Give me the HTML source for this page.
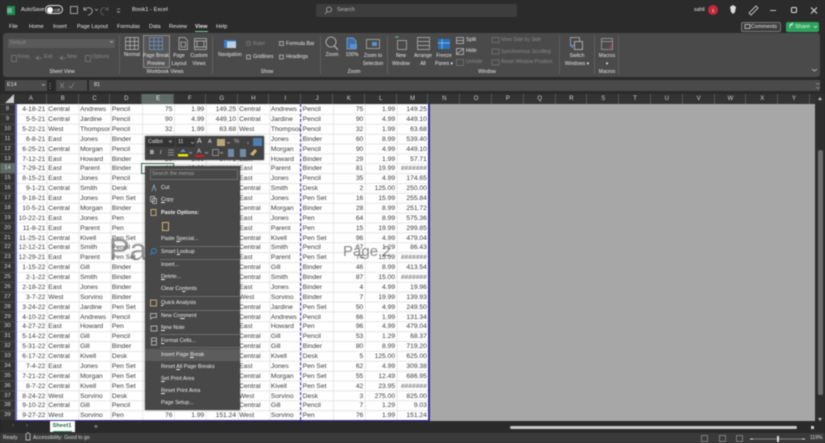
<!DOCTYPE html>
<html><head><meta charset="utf-8">
<style>
html,body{margin:0;padding:0;width:825px;height:443px;overflow:hidden;background:#262626}
#w{position:absolute;left:0;top:0;width:825px;height:443px;overflow:hidden;background:#2a2a2a;font-family:"Liberation Sans",sans-serif;filter:blur(.5px)}
.b{position:absolute}
.t{position:absolute;white-space:nowrap;color:#e6e6e6;font-size:5.4px;line-height:7px}
.c{transform:translateX(-50%);text-align:center}
.d{color:#8a8a8a}
.tab{font-size:5.5px;color:#e8e8e8;top:24px}
#gb{position:absolute;left:15px;top:104px;width:413.4px;height:316px;background-color:#fff;background-image:linear-gradient(to right,#e6e6e6 1px,transparent 1px),linear-gradient(to bottom,#e6e6e6 1px,transparent 1px);background-size:31.8px 9.88px}
#g{position:absolute;left:15px;top:105.2px;display:grid;grid-template-columns:repeat(13,31.8px);grid-auto-rows:9.88px;width:413.4px;color:#3c3c3c;font-size:6.7px;line-height:9.88px}
#g span{white-space:nowrap;overflow:hidden;padding:0 1.5px}
#g span:nth-child(13n+1),#g span:nth-child(13n+5),#g span:nth-child(13n+6),#g span:nth-child(13n+7),#g span:nth-child(13n+11),#g span:nth-child(13n+12),#g span:nth-child(13n){text-align:right}
#rb{position:absolute;left:0;top:104px;width:15px;height:316px;background:#333;background-image:linear-gradient(to bottom,#4a4a4a 1px,transparent 1px);background-size:15px 9.88px}
#r{position:absolute;left:0;top:105.2px;width:15px;display:grid;grid-auto-rows:9.88px;color:#d8d8d8;font-size:5.8px;line-height:9.88px;text-align:center}
#ch{position:absolute;left:15px;top:94px;height:10px;width:800px;display:grid;grid-template-columns:repeat(25,31.8px);background:#333;color:#d0d0d0;font-size:6px;line-height:10px;text-align:center}
#ch span{box-shadow:inset -1px 0 #555}
.m{position:absolute;left:161px;font-size:5.4px;line-height:7px;color:#ececec;white-space:nowrap}
.s{position:absolute;left:160px;width:80px;height:1px;background:#6a6a6a}
u{text-decoration:underline}
</style></head><body><div id="w">

<div class="b" style="left:0;top:0;width:825px;height:33px;background:#2b2b2b"></div>
<div class="b" style="left:316px;top:4px;width:201px;height:13px;background:#3d3d3d;border-radius:2px"></div>
<div class="t" style="left:337px;top:7px;color:#bbb;font-size:5.6px">Search</div>
<div class="t" style="left:21px;top:7px;font-size:5.4px">AutoSave</div>
<div class="b" style="left:45px;top:5px;width:18px;height:9px;border:1px solid #ddd;border-radius:6px;box-sizing:border-box"></div>
<div class="b" style="left:46.5px;top:6.5px;width:6px;height:6px;background:#fff;border-radius:50%"></div>
<div class="t" style="left:54px;top:6.5px;font-size:4.6px">Off</div>
<div class="t" style="left:132px;top:7px;font-size:5.8px">Book1 - Excel</div>
<div class="t" style="left:694px;top:7px;font-size:5.2px">sahil</div>
<div class="b" style="left:708px;top:5px;width:10px;height:10px;border-radius:50%;background:#c4283c"></div>
<div class="t c" style="left:713px;top:6.5px;font-size:4.6px;color:#fff">1</div>

<div class="t tab" style="left:9px">File</div>
<div class="t tab" style="left:29px">Home</div>
<div class="t tab" style="left:53px">Insert</div>
<div class="t tab" style="left:77px">Page Layout</div>
<div class="t tab" style="left:117px">Formulas</div>
<div class="t tab" style="left:149px">Data</div>
<div class="t tab" style="left:169px">Review</div>
<div class="t tab" style="left:195px;font-weight:bold">View</div>
<div class="b" style="left:195px;top:31px;width:13px;height:1px;background:#7fc9a0"></div>
<div class="t tab" style="left:216px">Help</div>

<div class="b" style="left:741px;top:22px;width:40px;height:10px;background:#3c3c3c;border:1px solid #777;border-radius:2px;box-sizing:border-box"></div>
<div class="t" style="left:751px;top:23.5px;font-size:5.4px">Comments</div>
<div class="b" style="left:786px;top:22px;width:33px;height:10px;background:#2ea25d;border-radius:2px"></div>
<div class="t" style="left:795px;top:23.5px;font-size:5.6px;color:#dfffe8">Share</div>

<div class="b" style="left:3px;top:33px;width:817px;height:44px;background:#4a4a4a;border-radius:3px"></div>
<div class="b" style="left:8px;top:39px;width:107px;height:9px;background:#5a5a5a"></div>
<div class="t d" style="left:10px;top:40px;font-size:5px">Default</div>
<div class="t d" style="left:18px;top:54px;font-size:5px">Keep</div>
<div class="t d" style="left:44px;top:54px;font-size:5px">Exit</div>
<div class="t d" style="left:67px;top:54px;font-size:5px">New</div>
<div class="t d" style="left:92px;top:54px;font-size:5px">Options</div>
<div class="t c" style="left:62px;top:68.5px;font-size:5px">Sheet View</div>

<div class="b" style="left:143px;top:35px;width:27px;height:33px;border:1px solid #8a8a8a;background:#565656;box-sizing:border-box"></div>
<div class="t c" style="left:132px;top:51.5px;font-size:5px">Normal</div>
<div class="t c" style="left:156px;top:51.5px;font-size:5px;line-height:8px">Page Break<br>Preview</div>
<div class="t c" style="left:179px;top:51.5px;font-size:5px;line-height:8px">Page<br>Layout</div>
<div class="t c" style="left:199px;top:51.5px;font-size:5px;line-height:8px">Custom<br>Views</div>
<div class="t c" style="left:165px;top:68.5px;font-size:5px">Workbook Views</div>

<div class="t c" style="left:230px;top:51.5px;font-size:5px">Navigation</div>
<div class="t d" style="left:253px;top:40.5px;font-size:5px">Ruler</div>
<div class="t" style="left:253px;top:54px;font-size:5.2px">Gridlines</div>
<div class="t" style="left:286px;top:40.5px;font-size:5.2px">Formula Bar</div>
<div class="t" style="left:286px;top:54px;font-size:5.2px">Headings</div>
<div class="t c" style="left:267px;top:68.5px;font-size:5px">Show</div>

<div class="t c" style="left:332px;top:51.5px;font-size:5px">Zoom</div>
<div class="t c" style="left:352px;top:51.5px;font-size:5px">100%</div>
<div class="t c" style="left:373px;top:51.5px;font-size:5px;line-height:8px">Zoom to<br>Selection</div>
<div class="t c" style="left:354px;top:68.5px;font-size:5px">Zoom</div>

<div class="t c" style="left:401px;top:51.5px;font-size:5px;line-height:8px">New<br>Window</div>
<div class="t c" style="left:423px;top:51.5px;font-size:5px;line-height:8px">Arrange<br>All</div>
<div class="t c" style="left:444px;top:51.5px;font-size:5px;line-height:8px">Freeze<br>Panes ▾</div>
<div class="t" style="left:466px;top:37px;font-size:5.2px">Split</div>
<div class="t" style="left:466px;top:48px;font-size:5.2px">Hide</div>
<div class="t d" style="left:466px;top:59px;font-size:5.2px">Unhide</div>
<div class="t d" style="left:501px;top:37px;font-size:5px">View Side by Side</div>
<div class="t d" style="left:501px;top:48.5px;font-size:5px">Synchronous Scrolling</div>
<div class="t d" style="left:501px;top:59px;font-size:5px">Reset Window Position</div>
<div class="t c" style="left:487px;top:68.5px;font-size:5px">Window</div>
<div class="t c" style="left:577px;top:51.5px;font-size:5px;line-height:8px">Switch<br>Windows ▾</div>
<div class="t c" style="left:607px;top:51.5px;font-size:5px;line-height:8px">Macros<br>▾</div>
<div class="t c" style="left:607px;top:68.5px;font-size:5px">Macros</div>

<div class="b" style="left:5px;top:80px;width:42px;height:11px;background:#4a4a4a"></div>
<div class="t" style="left:7px;top:82px;font-size:5.4px">E14</div>
<div class="b" style="left:56px;top:80px;width:31px;height:11px;background:#4a4a4a"></div>
<div class="b" style="left:89px;top:80px;width:731px;height:11px;background:#4a4a4a"></div>
<div class="t" style="left:94px;top:82px;font-size:5.4px">81</div>

<div id="ch"><span>A</span><span>B</span><span>C</span><span>D</span><span style="background:#5f6b66;color:#eee">E</span><span>F</span><span>G</span><span>H</span><span>I</span><span>J</span><span>K</span><span>L</span><span>M</span><span>N</span><span>O</span><span>P</span><span>Q</span><span>R</span><span>S</span><span>T</span><span>U</span><span>V</span><span>W</span><span>X</span><span>Y</span></div>
<div class="b" style="left:0;top:94px;width:15px;height:10px;background:#333"></div>
<div class="b" style="left:815px;top:94px;width:10px;height:10px;background:#2f2f2f"></div>
<div class="b" style="left:430px;top:104px;width:385px;height:317px;background:#a7a7a7"></div>
<div class="b" style="left:815px;top:104px;width:10px;height:317px;background:#2d2d2d"></div>
<div class="b" style="left:818px;top:150px;width:5px;height:245px;background:#6e6e6e;border-radius:2px"></div>

<div id="rb"></div>
<div class="b" style="left:0;top:163.3px;width:15px;height:9.9px;background:#5f6b66"></div>
<div id="r"><span>8</span><span>9</span><span>10</span><span>11</span><span>12</span><span>13</span><span>14</span><span>15</span><span>16</span><span>17</span><span>18</span><span>19</span><span>20</span><span>21</span><span>22</span><span>23</span><span>24</span><span>25</span><span>26</span><span>27</span><span>28</span><span>29</span><span>30</span><span>31</span><span>32</span><span>33</span><span>34</span><span>35</span><span>36</span><span>37</span><span>38</span><span>39</span></div>

<div id="gb"></div>
<div id="g">
<span>4-18-21</span><span>Central</span><span>Andrews</span><span>Pencil</span><span>75</span><span>1.99</span><span>149.25</span><span>Central</span><span>Andrews</span><span>Pencil</span><span>75</span><span>1.99</span><span>149.25</span>
<span>5-5-21</span><span>Central</span><span>Jardine</span><span>Pencil</span><span>90</span><span>4.99</span><span>449.10</span><span>Central</span><span>Jardine</span><span>Pencil</span><span>90</span><span>4.99</span><span>449.10</span>
<span>5-22-21</span><span>West</span><span>Thompson</span><span>Pencil</span><span>32</span><span>1.99</span><span>63.68</span><span>West</span><span>Thompson</span><span>Pencil</span><span>32</span><span>1.99</span><span>63.68</span>
<span>6-8-21</span><span>East</span><span>Jones</span><span>Binder</span><span>60</span><span>8.99</span><span>539.40</span><span>East</span><span>Jones</span><span>Binder</span><span>60</span><span>8.99</span><span>539.40</span>
<span>6-25-21</span><span>Central</span><span>Morgan</span><span>Pencil</span><span>90</span><span>4.99</span><span>449.10</span><span>Central</span><span>Morgan</span><span>Pencil</span><span>90</span><span>4.99</span><span>449.10</span>
<span>7-12-21</span><span>East</span><span>Howard</span><span>Binder</span><span>29</span><span>1.99</span><span>57.71</span><span>East</span><span>Howard</span><span>Binder</span><span>29</span><span>1.99</span><span>57.71</span>
<span>7-29-21</span><span>East</span><span>Parent</span><span>Binder</span><span>81</span><span>19.99</span><span>#######</span><span>East</span><span>Parent</span><span>Binder</span><span>81</span><span>19.99</span><span>#######</span>
<span>8-15-21</span><span>East</span><span>Jones</span><span>Pencil</span><span>35</span><span>4.99</span><span>174.65</span><span>East</span><span>Jones</span><span>Pencil</span><span>35</span><span>4.99</span><span>174.65</span>
<span>9-1-21</span><span>Central</span><span>Smith</span><span>Desk</span><span>2</span><span>125.00</span><span>250.00</span><span>Central</span><span>Smith</span><span>Desk</span><span>2</span><span>125.00</span><span>250.00</span>
<span>9-18-21</span><span>East</span><span>Jones</span><span>Pen Set</span><span>16</span><span>15.99</span><span>255.84</span><span>East</span><span>Jones</span><span>Pen Set</span><span>16</span><span>15.99</span><span>255.84</span>
<span>10-5-21</span><span>Central</span><span>Morgan</span><span>Binder</span><span>28</span><span>8.99</span><span>251.72</span><span>Central</span><span>Morgan</span><span>Binder</span><span>28</span><span>8.99</span><span>251.72</span>
<span>10-22-21</span><span>East</span><span>Jones</span><span>Pen</span><span>64</span><span>8.99</span><span>575.36</span><span>East</span><span>Jones</span><span>Pen</span><span>64</span><span>8.99</span><span>575.36</span>
<span>11-8-21</span><span>East</span><span>Parent</span><span>Pen</span><span>15</span><span>19.99</span><span>299.85</span><span>East</span><span>Parent</span><span>Pen</span><span>15</span><span>19.99</span><span>299.85</span>
<span>11-25-21</span><span>Central</span><span>Kivell</span><span>Pen Set</span><span>96</span><span>4.99</span><span>479.04</span><span>Central</span><span>Kivell</span><span>Pen Set</span><span>96</span><span>4.99</span><span>479.04</span>
<span>12-12-21</span><span>Central</span><span>Smith</span><span>Pencil</span><span>67</span><span>1.29</span><span>86.43</span><span>Central</span><span>Smith</span><span>Pencil</span><span>67</span><span>1.29</span><span>86.43</span>
<span>12-29-21</span><span>East</span><span>Parent</span><span>Pen Set</span><span>74</span><span>15.99</span><span>#######</span><span>East</span><span>Parent</span><span>Pen Set</span><span>74</span><span>15.99</span><span>#######</span>
<span>1-15-22</span><span>Central</span><span>Gill</span><span>Binder</span><span>46</span><span>8.99</span><span>413.54</span><span>Central</span><span>Gill</span><span>Binder</span><span>46</span><span>8.99</span><span>413.54</span>
<span>2-1-22</span><span>Central</span><span>Smith</span><span>Binder</span><span>87</span><span>15.00</span><span>#######</span><span>Central</span><span>Smith</span><span>Binder</span><span>87</span><span>15.00</span><span>#######</span>
<span>2-18-22</span><span>East</span><span>Jones</span><span>Binder</span><span>4</span><span>4.99</span><span>19.96</span><span>East</span><span>Jones</span><span>Binder</span><span>4</span><span>4.99</span><span>19.96</span>
<span>3-7-22</span><span>West</span><span>Sorvino</span><span>Binder</span><span>7</span><span>19.99</span><span>139.93</span><span>West</span><span>Sorvino</span><span>Binder</span><span>7</span><span>19.99</span><span>139.93</span>
<span>3-24-22</span><span>Central</span><span>Jardine</span><span>Pen Set</span><span>50</span><span>4.99</span><span>249.50</span><span>Central</span><span>Jardine</span><span>Pen Set</span><span>50</span><span>4.99</span><span>249.50</span>
<span>4-10-22</span><span>Central</span><span>Andrews</span><span>Pencil</span><span>66</span><span>1.99</span><span>131.34</span><span>Central</span><span>Andrews</span><span>Pencil</span><span>66</span><span>1.99</span><span>131.34</span>
<span>4-27-22</span><span>East</span><span>Howard</span><span>Pen</span><span>96</span><span>4.99</span><span>479.04</span><span>East</span><span>Howard</span><span>Pen</span><span>96</span><span>4.99</span><span>479.04</span>
<span>5-14-22</span><span>Central</span><span>Gill</span><span>Pencil</span><span>53</span><span>1.29</span><span>68.37</span><span>Central</span><span>Gill</span><span>Pencil</span><span>53</span><span>1.29</span><span>68.37</span>
<span>5-31-22</span><span>Central</span><span>Gill</span><span>Binder</span><span>80</span><span>8.99</span><span>719.20</span><span>Central</span><span>Gill</span><span>Binder</span><span>80</span><span>8.99</span><span>719.20</span>
<span>6-17-22</span><span>Central</span><span>Kivell</span><span>Desk</span><span>5</span><span>125.00</span><span>625.00</span><span>Central</span><span>Kivell</span><span>Desk</span><span>5</span><span>125.00</span><span>625.00</span>
<span>7-4-22</span><span>East</span><span>Jones</span><span>Pen Set</span><span>62</span><span>4.99</span><span>309.38</span><span>East</span><span>Jones</span><span>Pen Set</span><span>62</span><span>4.99</span><span>309.38</span>
<span>7-21-22</span><span>Central</span><span>Morgan</span><span>Pen Set</span><span>55</span><span>12.49</span><span>686.95</span><span>Central</span><span>Morgan</span><span>Pen Set</span><span>55</span><span>12.49</span><span>686.95</span>
<span>8-7-22</span><span>Central</span><span>Kivell</span><span>Pen Set</span><span>42</span><span>23.95</span><span>#######</span><span>Central</span><span>Kivell</span><span>Pen Set</span><span>42</span><span>23.95</span><span>#######</span>
<span>8-24-22</span><span>West</span><span>Sorvino</span><span>Desk</span><span>3</span><span>275.00</span><span>825.00</span><span>West</span><span>Sorvino</span><span>Desk</span><span>3</span><span>275.00</span><span>825.00</span>
<span>9-10-22</span><span>Central</span><span>Gill</span><span>Pencil</span><span>7</span><span>1.29</span><span>9.03</span><span>Central</span><span>Gill</span><span>Pencil</span><span>7</span><span>1.29</span><span>9.03</span>
<span>9-27-22</span><span>West</span><span>Sorvino</span><span>Pen</span><span>76</span><span>1.99</span><span>151.24</span><span>West</span><span>Sorvino</span><span>Pen</span><span>76</span><span>1.99</span><span>151.24</span>
</div>

<div class="b" style="left:15px;top:104px;width:1.5px;height:316px;background:#6d66cc"></div>
<div class="b" style="left:427.5px;top:104px;width:2px;height:317px;background:#3a2ea0"></div>
<div class="b" style="left:15px;top:420px;width:414px;height:1px;background:#3a2ea0"></div>
<div class="b" style="left:300px;top:104px;width:0;height:316px;border-left:1.3px dashed #3a2ea0"></div>
<div class="b" style="left:109px;top:232px;font-size:31px;line-height:36px;color:rgba(110,110,110,.7);white-space:nowrap">Page 1</div>
<div class="b" style="left:343px;top:243px;font-size:15px;line-height:18px;color:rgba(110,110,110,.8);white-space:nowrap">Page 2</div>
<div class="b" style="left:141px;top:163px;width:33px;height:11px;border:1px solid #2c6e4c;box-sizing:border-box"></div>

<div class="b" style="left:145px;top:166px;width:95px;height:244px;background:#484848;box-shadow:0 0 2px rgba(0,0,0,.5)"></div>
<div class="b" style="left:150px;top:169px;width:88px;height:11px;border:1px solid #6e6e6e;box-sizing:border-box"></div>
<div class="t d" style="left:152px;top:171px;font-size:5.2px;color:#a8a8a8">Search the menus</div>
<div class="b" style="left:145px;top:349px;width:95px;height:12px;background:#5c5c5c"></div>
<div class="m" style="top:184.5px">Cut</div>
<div class="m" style="top:196.5px"><u>C</u>opy</div>
<div class="m" style="top:209.5px;font-weight:bold">Paste Options:</div>
<div class="m" style="top:235.5px">Paste <u>S</u>pecial...</div>
<div class="s" style="top:246px"></div>
<div class="m" style="top:248.5px">Smart <u>L</u>ookup</div>
<div class="s" style="top:259px"></div>
<div class="m" style="top:262px">Insert...</div>
<div class="m" style="top:274px"><u>D</u>elete...</div>
<div class="m" style="top:286px">Clear Co<u>n</u>tents</div>
<div class="s" style="top:296px"></div>
<div class="m" style="top:299.5px"><u>Q</u>uick Analysis</div>
<div class="s" style="top:310px"></div>
<div class="m" style="top:312.5px">New Co<u>m</u>ment</div>
<div class="m" style="top:324.5px"><u>N</u>ew Note</div>
<div class="s" style="top:334px"></div>
<div class="m" style="top:337.5px"><u>F</u>ormat Cells...</div>
<div class="s" style="top:347px"></div>
<div class="m" style="top:351.5px">Insert Page <u>B</u>reak</div>
<div class="m" style="top:363.5px">Reset <u>A</u>ll Page Breaks</div>
<div class="m" style="top:375.5px"><u>S</u>et Print Area</div>
<div class="m" style="top:387.5px"><u>R</u>eset Print Area</div>
<div class="m" style="top:399.5px">Pa<u>g</u>e Setup...</div>

<div class="b" style="left:145px;top:136px;width:119px;height:24px;background:#424242;box-shadow:0 0 2px rgba(0,0,0,.5)"></div>
<div class="b" style="left:146px;top:138px;width:29px;height:9px;background:#333"></div>
<div class="b" style="left:176px;top:138px;width:19px;height:9px;background:#333"></div>
<div class="t" style="left:148px;top:139px;font-size:5.2px">Calibri</div>
<div class="t" style="left:178px;top:139px;font-size:5.2px">11</div>
<div class="t" style="left:197px;top:137.5px;font-size:7px">A</div>
<div class="t" style="left:208px;top:138.5px;font-size:5.5px">A</div>
<div class="t" style="left:234px;top:138.5px;font-size:6px;color:#bbb">%</div>
<div class="t" style="left:247px;top:138px;font-size:7px">,</div>
<div class="t" style="left:150px;top:149.5px;font-size:5.5px;font-weight:bold">B</div>
<div class="t" style="left:160px;top:149.5px;font-size:5.5px;font-style:italic">I</div>
<div class="t" style="left:197px;top:149px;font-size:6px">A</div>

<div class="b" style="left:0;top:421px;width:825px;height:12px;background:#2a2a2a"></div>
<div class="b" style="left:50px;top:421px;width:25px;height:11px;background:#fff"></div>
<div class="t c" style="left:62px;top:423px;font-size:5.8px;color:#1e6e42;font-weight:bold">Sheet1</div>
<div class="b" style="left:53px;top:431px;width:19px;height:1px;background:#1e8a50"></div>
<div class="t c" style="left:13px;top:423px;color:#777;font-size:6px">‹</div>
<div class="t c" style="left:27px;top:423px;color:#999;font-size:6px">›</div>
<div class="t c" style="left:96px;top:423px;color:#aaa;font-size:8px">+</div>
<div class="b" style="left:510px;top:425.5px;width:287px;height:3.5px;background:#c8c8c8;border-radius:2px"></div>
<div class="b" style="left:0;top:433px;width:825px;height:10px;background:#3a3a3a"></div>
<div class="t" style="left:3px;top:435px;font-size:5px;color:#ddd">Ready</div>
<div class="t" style="left:33px;top:435px;font-size:5.2px;color:#ddd">Accessibility: Good to go</div>
<div class="t" style="left:810px;top:435px;font-size:5px;color:#ddd">119%</div>

<svg class="b" style="left:0;top:0" width="825" height="443" viewBox="0 0 825 443" fill="none">
<rect x="7" y="6" width="8" height="9" fill="#1f8a50"/><rect x="7" y="8" width="5" height="5" fill="#fff" opacity=".35"/>
<rect x="70.500" y="6.500" width="7" height="7" stroke="#bbb" stroke-width=".8"/>
<path d="M84 7v3h3M84 10c2-3 7-3 8 0s-2 5-4 5" stroke="#bbb" stroke-width=".8"/><path d="M95 9l1.500 1.500L98 9" stroke="#aaa" stroke-width=".7"/>
<path d="M108 7v3h-3M108 10c-2-3-6-3-7 0s2 5 3 5" stroke="#666" stroke-width=".8"/><path d="M117 9h3M117 11l1.500 1.500L120 11" stroke="#aaa" stroke-width=".8"/>
<circle cx="329" cy="9.500" r="2.500" stroke="#aaa" stroke-width=".8"/><path d="M327 11.500l-2 2.500" stroke="#aaa" stroke-width=".8"/>
<path d="M730 7l3-2 3 2-1 5-2 2-2-2z" fill="#ddd"/><path d="M749 13l7-7 2 2-7 7z" stroke="#ddd" stroke-width=".8"/>
<path d="M770 10.500h6" stroke="#bbb"/><rect x="791.500" y="7.500" width="5" height="5" rx="1" stroke="#ddd"/><path d="M811 7.500l6 6M817 7.500l-6 6" stroke="#ddd"/>
<rect x="745" y="24.500" width="5" height="4" stroke="#ddd" stroke-width=".7"/><path d="M790 28v-3h3M790 25l3-2" stroke="#dfffe8" stroke-width=".8"/><path d="M814 26l1.500 1.500L817 26" stroke="#dfffe8" stroke-width=".7"/>

<g stroke="#7a7a7a" stroke-width=".8"><rect x="11.500" y="55.500" width="5" height="6"/><path d="M36 58h6M39 56l-3 2 3 2M60 58h6M63 56l-3 2 3 2"/><rect x="85.500" y="55.500" width="5" height="6"/></g>
<g stroke="#bdbdbd" stroke-width=".7"><path d="M125.500 37.500h13v12h-13zM125.500 41.500h13M125.500 45.500h13M130 37.500v12M134.500 37.500v12"/>
<path d="M179 37.500h6l2.500 3v9h-8.500z"/><rect x="181" y="42" width="4.500" height="5"/>
<path d="M194.500 38.500h12v11h-12zM194.500 41h12M194.500 47h12M197 41v6M204 41v6"/></g>
<path d="M149.500 37.500h13v12h-13zM149.500 41.500h13M149.500 45.500h13M154 37.500v12M158.500 37.500v12" stroke="#6f95bd" stroke-width=".8"/>
<rect x="224" y="40" width="12" height="8" fill="#bcd0e4"/><rect x="224" y="40" width="3" height="8" fill="#3c7fc4"/><rect x="224" y="40" width="12" height="1.500" fill="#3c7fc4"/>
<g fill="#555" stroke="#cfcfcf" stroke-width=".6"><rect x="246.500" y="41.500" width="4" height="4" stroke="#777"/><rect x="246.500" y="55" width="4" height="4"/><rect x="279.500" y="41.500" width="4" height="4"/><rect x="279.500" y="55" width="4" height="4"/></g>
<circle cx="331" cy="42" r="5" stroke="#bbb" stroke-width=".8"/><path d="M334.500 46l3.500 4" stroke="#bbb"/>
<path d="M347 38h6l3 3v8h-9z" stroke="#7aa7d4" stroke-width=".8" fill="#3e6fa5"/><rect x="350" y="44" width="7" height="5" fill="#5a92cc"/>
<rect x="366.500" y="39.500" width="13" height="9" stroke="#bbb" stroke-width=".7"/><rect x="372" y="42" width="5" height="4" fill="#5a92cc"/>
<rect x="397.500" y="40.500" width="9" height="9" stroke="#bbb" stroke-width=".7"/><path d="M397 38v-2M395 37h4" stroke="#4fb06a"/>
<path d="M417.500 37.500h12v12h-12zM417.500 41.500h12M417.500 45.500h12" stroke="#bbb" stroke-width=".7"/>
<rect x="438" y="39" width="12" height="10" fill="#2a72bd"/><path d="M442 39v10M438 43h12" stroke="#9cc4ec" stroke-width=".7"/>
<g stroke="#c8c8c8" stroke-width=".7"><rect x="456.500" y="37.500" width="7" height="6"/><path d="M456.500 40.500h7"/><rect x="456.500" y="48.500" width="7" height="6"/><path d="M456.500 54l7-5"/></g><rect x="456.500" y="59.500" width="7" height="6" stroke="#7a7a7a" stroke-width=".7"/>
<g stroke="#7a7a7a" stroke-width=".7"><rect x="492" y="37.500" width="7" height="5"/><rect x="492" y="49" width="7" height="5"/><rect x="492" y="60" width="7" height="5"/></g>
<rect x="570.500" y="37.500" width="9" height="8" stroke="#bbb" stroke-width=".7"/><rect x="574.500" y="41.500" width="8" height="8" stroke="#ccc" stroke-width=".7" fill="#4a4a4a"/><path d="M570 45l3 3" stroke="#4c9be8"/>
<rect x="601.500" y="38.500" width="11" height="11" stroke="#aaa" stroke-width=".7"/><path d="M601.500 41.500h11" stroke="#aaa" stroke-width=".7"/><path d="M612 44l-3 6" stroke="#c43c5a"/>
<path d="M812 69l2.500 2 2.500-2" stroke="#ccc" stroke-width=".8"/><path d="M816 83l2 1.500 2-1.500M816 87l2 1.500 2-1.500" stroke="#999" stroke-width=".7"/>
<path d="M110 41l1.500 1.500L113 41M42 84l1.500 1.500L45 84" stroke="#bbb" stroke-width=".7"/>
<path d="M50 83v.8M50 85.500v.8M50 88v.8" stroke="#bbb"/><path d="M60 83l4 5M64 83l-4 5M69 86l2 2 3-5" stroke="#888" stroke-width=".7"/>
<path d="M14 94v9H5z" fill="#ddd" opacity=".9"/>
<path d="M820 97l2 3h-4z M820 421l2-3h-4z" fill="#bbb"/><rect x="811" y="426" width="3" height="3" fill="#ccc"/>

<path d="M152 191l2-6 2 6M154 186l-1 1" stroke="#8fb0d8" stroke-width=".8"/>
<rect x="150.500" y="196.500" width="4" height="5" stroke="#ccc" stroke-width=".7"/><rect x="152.500" y="198.500" width="4" height="5" stroke="#ccc" stroke-width=".7"/>
<rect x="151" y="209.500" width="5" height="6" stroke="#d9c27a" stroke-width=".8"/>
<rect x="162.500" y="222.500" width="6" height="8" stroke="#d9c27a" stroke-width=".9"/>
<circle cx="154" cy="251" r="2.500" stroke="#3f7fc4"/><path d="M152 253l-2 2" stroke="#3f7fc4"/>
<rect x="150.500" y="300" width="6" height="6" stroke="#cfc080" stroke-width=".8"/>
<path d="M150.500 313.500h6v4h-4l-2 1.500z" stroke="#ccc" stroke-width=".7"/>
<path d="M151 326h6v5h-6z" stroke="#ccc" stroke-width=".7"/>
<path d="M151.500 338h5v7h-5zM151.500 341h5" stroke="#ccc" stroke-width=".7"/>
<path d="M171 140l-1.500 1.500M172 141l-1.500 1.500 -1.500-1.500M191 142l1.500 1.500 1.500-1.500" stroke="#bbb" stroke-width=".6"/>
<rect x="217" y="139" width="8" height="7" fill="#b8a878"/><path d="M227 142l1.500 1.500 1.500-1.500" stroke="#bbb" stroke-width=".6"/>
<rect x="253" y="138" width="9" height="8" fill="#4f7fb0"/>
<path d="M168 150h6M168 152.500h6M168 155h6" stroke="#aaa" stroke-width=".7"/>
<path d="M180 152l3-3 3 3z" fill="#6a8fb5"/><rect x="178" y="154" width="10" height="2.500" fill="#e8e800"/>
<rect x="195" y="155" width="9" height="2" fill="#d41c1c"/>
<path d="M189 152l1.500 1.500 1.500-1.500M205 152l1.500 1.500 1.500-1.500M220 152l1.500 1.500 1.500-1.500" stroke="#bbb" stroke-width=".6"/>
<rect x="212.500" y="149.500" width="6" height="6" stroke="#aaa" stroke-width=".7"/>
<rect x="228" y="149" width="6" height="8" fill="#6f8ba8"/><rect x="240" y="149" width="6" height="8" fill="#6f8ba8"/>
<path d="M250 154l5-5 2 2-4 5z" fill="#cdb06e"/>
<path d="M26 434l2-1.500 2 1.500v6h-4z" stroke="#ddd" stroke-width=".7"/>
<g stroke="#999" stroke-width=".7"><rect x="701.500" y="435.500" width="6" height="6"/><rect x="719.500" y="435.500" width="6" height="6"/><rect x="736.500" y="435.500" width="6" height="6"/></g>
<path d="M750 439h53" stroke="#999" stroke-width=".7"/><rect x="777" y="436" width="2" height="6" fill="#ddd"/><path d="M750 439h3M802 439h3" stroke="#ddd"/>
</svg>

<div class="b" style="left:119px;top:36px;width:1px;height:38px;background:#5f5f5f"></div>
<div class="b" style="left:212px;top:36px;width:1px;height:38px;background:#5f5f5f"></div>
<div class="b" style="left:320px;top:36px;width:1px;height:38px;background:#5f5f5f"></div>
<div class="b" style="left:387px;top:36px;width:1px;height:38px;background:#5f5f5f"></div>
<div class="b" style="left:559px;top:36px;width:1px;height:38px;background:#5f5f5f"></div>
<div class="b" style="left:594px;top:36px;width:1px;height:38px;background:#5f5f5f"></div>
<div class="b" style="left:618px;top:36px;width:1px;height:38px;background:#5f5f5f"></div>
</div></body></html>
